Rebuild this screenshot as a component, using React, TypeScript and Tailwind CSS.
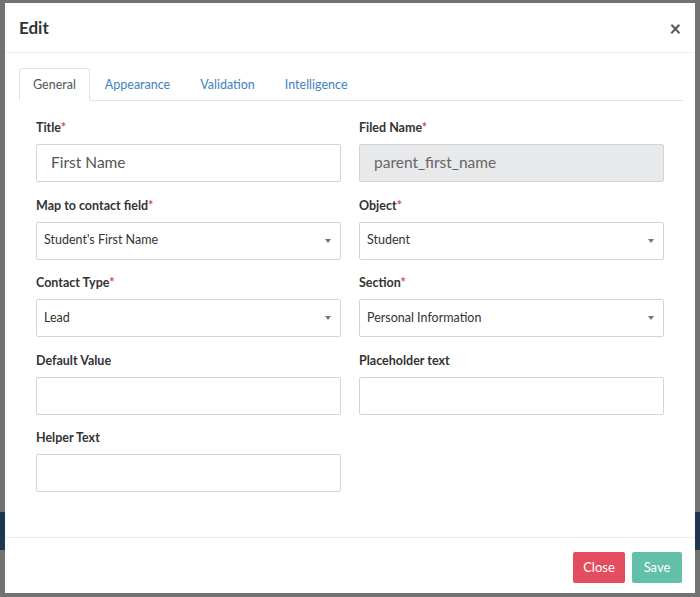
import React from "react";

function Label({ text, required }: { text: string; required?: boolean }) {
  return (
    <div className="h-4 text-[12.5px] font-bold leading-4 text-[#333]">
      {text}
      {required && <span className="text-[#e0465c]">*</span>}
    </div>
  );
}

function TextInput({ value, disabled }: { value?: string; disabled?: boolean }) {
  return (
    <div
      className={
        "mt-2 flex h-[38px] items-center rounded-[2px] border border-[#d4d4d4] px-[14px] text-[15.5px] text-[#555] " +
        (disabled ? "bg-[#e8e9eb] text-[#666]" : "bg-white")
      }
    >
      {value}
    </div>
  );
}

function Select({ value }: { value: string }) {
  return (
    <div className="mt-2 flex h-[38px] items-center justify-between rounded-[2px] border border-[#d4d4d4] bg-white pl-[7px] pr-[9px] text-[12.5px] text-[#333]">
      <span>{value}</span>
      <span className="h-0 w-0 border-x-[3.5px] border-t-[4px] border-x-transparent border-t-[#777]" />
    </div>
  );
}

function Field({ children }: { children: React.ReactNode }) {
  return <div className="flex flex-col">{children}</div>;
}

export default function App() {
  const tabs = ["General", "Appearance", "Validation", "Intelligence"];
  return (
    <div
      className="relative h-[597px] w-[700px] overflow-hidden bg-[#727272] px-[5px] pt-[3px]"
      style={{ fontFamily: "Lato, 'Open Sans', sans-serif" }}
    >
      {/* page behind the overlay */}
      <div className="absolute left-0 right-0 top-[512px] h-[38px] bg-[#1d3652]" />

      <div className="relative flex h-[590px] w-[690px] flex-col bg-white">
        <div className="flex h-[50px] shrink-0 items-center justify-between border-b border-[#eceeef] pl-[14px] pr-[14px]">
          <h2 className="text-[17px] font-bold text-[#333]">Edit</h2>
          <span className="text-[20px] font-bold leading-none text-[#555]">×</span>
        </div>

        <div className="flex-1 pl-[14px] pr-[12px] pt-[15px]">
          <div className="flex h-[33px] border-b border-[#e3e3e3]">
            {tabs.map((t, i) => (
              <div
                key={t}
                className={
                  "flex h-[33px] items-center pt-px text-[12.5px] " +
                  (i === 0
                    ? "-mb-px rounded-t-[3px] border border-b-white border-[#e3e3e3] bg-white px-[13px] text-[#555]"
                    : "px-[15px] text-[#3f7fbf]")
                }
              >
                {t}
              </div>
            ))}
          </div>

          <div className="grid grid-cols-[305px_305px] gap-x-[18px] gap-y-[15.5px] pl-[17px] pt-[19px]">
            <Field>
              <Label text="Title" required />
              <TextInput value="First Name" />
            </Field>
            <Field>
              <Label text="Filed Name" required />
              <TextInput value="parent_first_name" disabled />
            </Field>
            <Field>
              <Label text="Map to contact field" required />
              <Select value="Student's First Name" />
            </Field>
            <Field>
              <Label text="Object" required />
              <Select value="Student" />
            </Field>
            <Field>
              <Label text="Contact Type" required />
              <Select value="Lead" />
            </Field>
            <Field>
              <Label text="Section" required />
              <Select value="Personal Information" />
            </Field>
            <Field>
              <Label text="Default Value" />
              <TextInput />
            </Field>
            <Field>
              <Label text="Placeholder text" />
              <TextInput />
            </Field>
            <Field>
              <Label text="Helper Text" />
              <TextInput />
            </Field>
          </div>
        </div>

        <div className="flex h-[56px] shrink-0 items-start justify-end gap-[7px] border-t border-[#eceeef] pr-[13px] pt-[14px]">
          <button className="h-[31px] w-[52px] rounded-[2px] bg-[#e34d5f] text-[13px] text-white">Close</button>
          <button className="h-[31px] w-[50px] rounded-[2px] bg-[#62c0a8] text-[13px] text-white">Save</button>
        </div>
      </div>
    </div>
  );
}
